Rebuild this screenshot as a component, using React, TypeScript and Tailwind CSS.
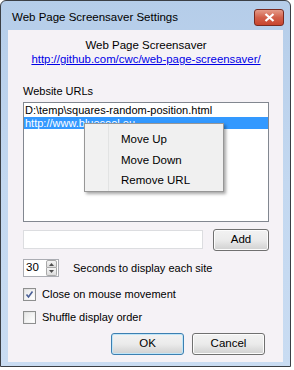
import React from "react";

const font = { fontFamily: '"Liberation Sans", Arial, sans-serif' };

function Checkbox({ checked }: { checked?: boolean }) {
  return (
    <div className="w-[13px] h-[13px] border border-[#8e8f8f] bg-gradient-to-br from-[#dcdcdc] to-[#fbfbfb] flex items-center justify-center">
      <div className="w-[9px] h-[9px] bg-gradient-to-br from-[#e8e8e8] to-[#ffffff] flex items-center justify-center">
        {checked && (
          <svg width="9" height="9" viewBox="0 0 9 9">
            <path d="M1.5 4.5 L3.5 7 L7.5 1.5" stroke="#4a5f97" strokeWidth="1.6" fill="none" />
          </svg>
        )}
      </div>
    </div>
  );
}

function Button({ label, w, def }: { label: string; w: string; def?: boolean }) {
  return (
    <div
      className={`${w} h-[22px] rounded-[3px] border ${def ? "border-[#3c7fb1] shadow-[inset_0_0_0_1px_#bfe5f8]" : "border-[#707070] shadow-[inset_0_0_0_1px_#fcfcfc]"} bg-gradient-to-b from-[#f2f2f2] via-[#ebebeb] to-[#d0d0d0] flex items-center justify-center text-[11.5px] text-black`}
    >
      {label}
    </div>
  );
}

export default function App() {
  return (
    <div className="w-[294px] h-[370px] bg-white relative overflow-hidden" style={font}>
      <div className="w-[291px] h-[367px] border border-[#3b3f45] rounded-t-[6px] bg-gradient-to-b from-[#b5cde9] via-[#c3d8f0] to-[#c9dcf2] flex flex-col px-[7px] pb-[4px]">
        {/* title bar */}
        <div className="h-[29px] flex items-start justify-between shrink-0">
          <div className="text-[11.5px] text-black mt-[9px] ml-[4px] leading-[15px]">Web Page Screensaver Settings</div>
          <div className="mt-[8px] mr-[-1px] w-[30px] h-[17px] rounded-[3px] border border-[#7a2a1f] bg-gradient-to-b from-[#e49a88] via-[#d2604a] to-[#c8442d] flex items-center justify-center">
            <svg width="11" height="9" viewBox="0 0 11 9">
              <path d="M1.5 1 L9.5 8 M9.5 1 L1.5 8" stroke="#ffffff" strokeWidth="2.2" />
            </svg>
          </div>
        </div>
        {/* client area */}
        <div className="flex-1 bg-[#f5f2f6] flex flex-col pl-[15px] pr-[14px] text-[11px] text-black">
          <div className="mt-[8px] h-[14px] leading-[14px] text-center text-[11.5px]">Web Page Screensaver</div>
          <div className="h-[14px] leading-[14px] text-center text-[11.4px] text-[#0000e6] underline">
            http://github.com/cwc/web-page-screensaver/
          </div>
          <div className="mt-[18px] h-[14px] leading-[14px]">Website URLs</div>
          <div className="mt-[4px] h-[120px] border border-[#828790] bg-white relative">
            <div className="h-[13px] leading-[13px] pl-[1px] whitespace-nowrap mt-[1px]">D:\temp\squares-random-position.html</div>
            <div className="h-[12px] leading-[12px] pl-[1px] bg-[#3399ff] text-white whitespace-nowrap">http://www.bluecool.eu</div>
            <div className="absolute left-[60px] top-[20px] w-[140px] h-[69px] bg-[#f0f0f0] border border-[#979797] shadow-[2px_2px_3px_rgba(0,0,0,0.35)] flex">
              <div className="w-[24px] h-full bg-[#f1f1f1] border-r border-[#e2e3e3]" />
              <div className="flex flex-col pl-[12px] pt-[5px] text-[11.5px]">
                <div className="h-[22px] leading-[20px]">Move Up</div>
                <div className="h-[22px] leading-[20px]">Move Down</div>
                <div className="h-[22px] leading-[20px]">Remove URL</div>
              </div>
            </div>
          </div>
          <div className="mt-[7px] flex items-center justify-between h-[21px]">
            <div className="w-[180px] h-[19px] border border-[#dcdde0] bg-white" />
            <Button label="Add" w="w-[56px]" />
          </div>
          <div className="mt-[9px] flex items-center h-[18px]">
            <div className="w-[36px] h-[18px] border border-[#abadb3] bg-white flex items-center">
              <span className="pl-[2px] text-[11.5px] w-[22px]">30</span>
              <div className="w-[11px] h-[16px] flex flex-col">
                <div className="h-[8px] border border-[#a9a9a9] bg-gradient-to-b from-[#f6f6f6] to-[#dcdcdc] flex items-center justify-center rounded-t-[2px]">
                  <svg width="5" height="3" viewBox="0 0 5 3"><path d="M0 3 L2.5 0 L5 3Z" fill="#4d4d4d" /></svg>
                </div>
                <div className="h-[8px] border border-[#a9a9a9] border-t-0 bg-gradient-to-b from-[#f6f6f6] to-[#dcdcdc] flex items-center justify-center rounded-b-[2px]">
                  <svg width="5" height="3" viewBox="0 0 5 3"><path d="M0 0 L2.5 3 L5 0Z" fill="#4d4d4d" /></svg>
                </div>
              </div>
            </div>
            <span className="ml-[14px]">Seconds to display each site</span>
          </div>
          <div className="mt-[10px] flex items-center h-[14px] gap-[6px]">
            <Checkbox checked />
            <span>Close on mouse movement</span>
          </div>
          <div className="mt-[9px] flex items-center h-[14px] gap-[6px]">
            <Checkbox />
            <span>Shuffle display order</span>
          </div>
          <div className="mt-[9px] flex justify-end gap-[8px] pr-[4px]">
            <Button label="OK" w="w-[73px]" def />
            <Button label="Cancel" w="w-[73px]" />
          </div>
        </div>
      </div>
    </div>
  );
}
